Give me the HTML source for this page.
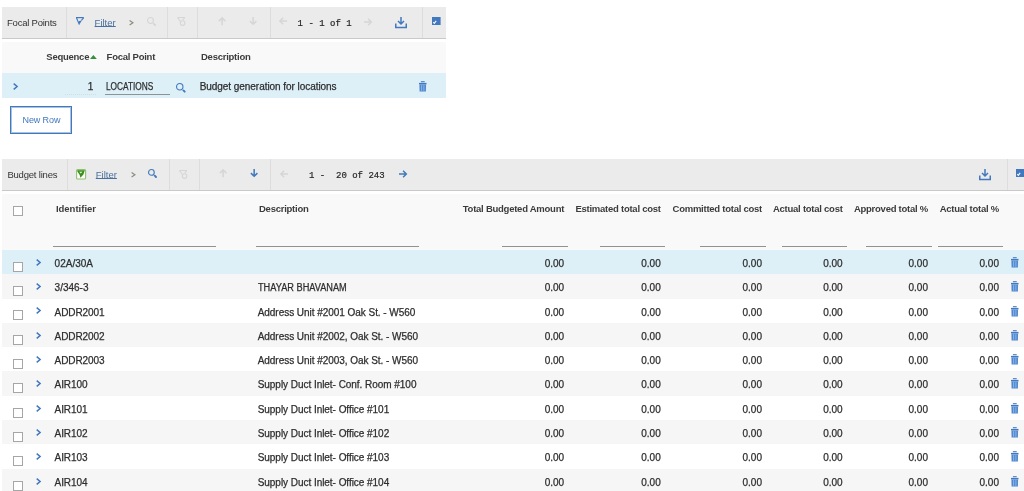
<!DOCTYPE html><html><head><meta charset="utf-8"><style>
*{margin:0;padding:0;box-sizing:border-box}
html,body{width:1024px;height:491px;overflow:hidden;background:#fff;font-family:"Liberation Sans",sans-serif;color:#2e2e2e}
#w{position:absolute;left:0;top:0;width:1024px;height:491px;will-change:transform}
.a{position:absolute;white-space:pre}
.tb{position:absolute;background:#ebebeb;border-bottom:1px solid #c9c9c9}
.sep{position:absolute;width:1px;background:#dddddd}
.t10{font-size:10px;line-height:12px;-webkit-text-stroke:0.25px currentColor}
.h{font-size:9.5px;line-height:12px;font-weight:bold;color:#3c3c3c;letter-spacing:-0.25px}
.t9{font-size:9px;line-height:12px}
.tt{font-size:10px;line-height:12px}
.mono{font-family:"Liberation Mono",monospace;font-size:9px;line-height:12px;font-weight:normal;color:#262626;-webkit-text-stroke:0.2px #262626}
.flt{color:#49709e;text-decoration:underline;text-underline-offset:0px}
.cb{position:absolute;width:10px;height:10px;border:1px solid #a6a6a6;background:#fff}
.ul{position:absolute;height:1px;background:#929292}
svg{position:absolute;overflow:visible}
</style></head><body><div id="w"><div class="tb" style="left:2px;top:7px;width:444px;height:32px"></div>
<div class="sep" style="left:66px;top:7px;height:31px"></div>
<div class="sep" style="left:167px;top:7px;height:31px"></div>
<div class="sep" style="left:197px;top:7px;height:31px"></div>
<div class="sep" style="left:270px;top:7px;height:31px"></div>
<div class="sep" style="left:422px;top:7px;height:31px"></div>
<div class="a tt" style="left:7px;top:17px;color:#333;font-size:9.5px;letter-spacing:-0.22px">Focal Points</div>
<svg style="left:76px;top:17.4px" width="9" height="8"><path d="M0 0.6 H7.8" stroke="#4178be" stroke-width="1.2"/><path d="M0.5 0.8 L3.3 7.6" stroke="#4178be" stroke-width="1.1"/><path d="M7.6 0.8 L5.4 3.4" stroke="#4178be" stroke-width="1.1"/><path d="M2.6 4.2 L6 3.2 L3.4 7.6 Z" fill="#4178be"/></svg>
<div class="a tt flt" style="left:94.6px;top:17px;font-size:9.5px;letter-spacing:0px">Filter</div>
<svg style="left:129.3px;top:19.9px" width="6" height="6"><path d="M0.6 0.5 L3.9 2.7 L0.6 4.9" fill="none" stroke="#8e8b7e" stroke-width="1.2"/></svg>
<svg style="left:146.8px;top:16.7px" width="10" height="10"><circle cx="3.5" cy="3.5" r="2.95" fill="none" stroke="#d6d6d6" stroke-width="1.1"/><path d="M6.9 6.9 L8.2 8.2" stroke="#d6d6d6" stroke-width="1.9" stroke-linecap="round"/></svg>
<svg style="left:177.3px;top:16.8px" width="10" height="10"><path d="M0.3 0.5 H8 M0.6 0.6 L3.2 4.2 M7.7 0.6 L5.8 3" fill="none" stroke="#d6d6d6" stroke-width="1.1"/><circle cx="5.6" cy="6.1" r="2.3" fill="none" stroke="#d6d6d6" stroke-width="1.1"/></svg>
<svg style="left:218px;top:17.2px" width="9" height="9"><path d="M4.15 8.2 V1 M0.9 4.1 L4.15 0.9 L7.4 4.1" fill="none" stroke="#d6d6d6" stroke-width="1.5"/></svg>
<svg style="left:248.5px;top:17px" width="9" height="9"><path d="M4.15 0 V7.2 M0.9 4.1 L4.15 7.3 L7.4 4.1" fill="none" stroke="#d6d6d6" stroke-width="1.5"/></svg>
<svg style="left:279px;top:17.4px" width="9" height="9"><path d="M8 4 H1 M4.1 0.8 L0.9 4 L4.1 7.2" fill="none" stroke="#d6d6d6" stroke-width="1.5"/></svg>
<div class="a mono" style="left:297.6px;top:17.8px;">1 - 1 of 1</div>
<svg style="left:364px;top:18px" width="9" height="9"><path d="M0 4 H7.2 M4.1 0.8 L7.3 4 L4.1 7.2" fill="none" stroke="#d6d6d6" stroke-width="1.5"/></svg>
<svg style="left:395px;top:17.1px" width="12" height="12"><path d="M6 0 V7 M3 4 L6 7 L9 4" fill="none" stroke="#4178be" stroke-width="1.5"/><path d="M0.75 6.4 V10.5 H11.25 V6.4" fill="none" stroke="#4178be" stroke-width="1.5"/></svg>
<svg style="left:432px;top:17.1px" width="9" height="8"><rect x="0" y="0" width="8.6" height="8" fill="#4178be"/><path d="M1.3 5.1 L2.3 6.3 L4.2 3.9" fill="none" stroke="#fff" stroke-width="1.1"/></svg>
<div class="a" style="left:2px;top:42px;width:444px;height:31.4px;background:#f9f9f9"></div>
<div class="a h" style="left:46.3px;top:51px;">Sequence</div>
<svg style="left:89.7px;top:54.6px" width="7" height="5"><path d="M0 4.1 L3.4 0 L6.8 4.1 Z" fill="#34913a"/></svg>
<div class="a h" style="left:106.6px;top:51px;">Focal Point</div>
<div class="a h" style="left:201px;top:51px;">Description</div>
<div class="a" style="left:2px;top:73.4px;width:444px;height:24.3px;background:#ddf0f8"></div>
<svg style="left:12.8px;top:82.6px" width="6" height="7"><path d="M0.7 0.6 L4.1 3.5 L0.7 6.4" fill="none" stroke="#4178be" stroke-width="1.5"/></svg>
<div class="a t10" style="right:930.7px;top:80.9px;text-align:right;">1</div>
<div class="a" style="left:64.6px;top:93.6px;width:31px;height:0;border-top:1px dotted #d2dde2"></div>
<div class="a t10" style="left:106px;top:80.9px;transform:scaleX(0.83);transform-origin:0 0">LOCATIONS</div>
<div class="ul" style="left:105px;top:93.8px;width:65px;background:#8c9396"></div>
<svg style="left:175.7px;top:82.9px" width="10" height="10"><circle cx="3.75" cy="3.75" r="3.2" fill="none" stroke="#4178be" stroke-width="1.1"/><path d="M7.4 7.4 L8.7 8.7" stroke="#4178be" stroke-width="1.9" stroke-linecap="round"/></svg>
<div class="a t10" style="left:199.7px;top:80.9px;letter-spacing:-0.05px">Budget generation for locations</div>
<svg style="left:418.8px;top:80.8px" width="8" height="11"><rect x="1.9" y="0" width="3.8" height="1.3" fill="#5b8fd3"/><rect x="0" y="1.9" width="7.5" height="1.5" fill="#4178be"/><path d="M0.4 3.4 H7.1 L6.9 10.6 H0.6 Z" fill="#4f88d0"/><rect x="2.3" y="4.2" width="0.8" height="5.6" fill="#9fc0ea"/><rect x="4.5" y="4.2" width="0.8" height="5.6" fill="#9fc0ea"/></svg>
<div class="a" style="left:10px;top:106px;width:62px;height:28px;border:1px solid #4178be;box-shadow:inset 0 0 0 1px rgba(65,120,190,0.45)"></div>
<div class="a t9" style="left:22.5px;top:114px;color:#4178be;letter-spacing:-0.1px">New Row</div>
<div class="tb" style="left:2px;top:159px;width:1022px;height:32px"></div>
<div class="sep" style="left:67px;top:159px;height:31px"></div>
<div class="sep" style="left:169px;top:159px;height:31px"></div>
<div class="sep" style="left:199px;top:159px;height:31px"></div>
<div class="sep" style="left:270px;top:159px;height:31px"></div>
<div class="sep" style="left:1007px;top:159px;height:31px"></div>
<div class="a tt" style="left:7.4px;top:169px;color:#333;font-size:9.5px;letter-spacing:-0.2px">Budget lines</div>
<svg style="left:75.6px;top:168.5px" width="11" height="11"><rect x="0.6" y="0.6" width="9" height="9.4" rx="1" fill="#fff" stroke="#8cc46a" stroke-width="1.1"/><path d="M1.2 1.3 H9 L8.4 2.6 L7.4 5.6 L4.4 8.8 L3.7 6 L1.4 2.4 Z" fill="#3b8d1e"/><path d="M3.2 2.7 H6.6 L4.7 4.5 Z" fill="#e9f5e0"/></svg>
<div class="a tt flt" style="left:95.8px;top:169px;font-size:9.5px;letter-spacing:0px">Filter</div>
<svg style="left:131px;top:171.8px" width="6" height="6"><path d="M0.6 0.5 L3.9 2.7 L0.6 4.9" fill="none" stroke="#8e8b7e" stroke-width="1.2"/></svg>
<svg style="left:148.2px;top:169px" width="10" height="10"><circle cx="3.4" cy="3.4" r="2.8499999999999996" fill="none" stroke="#4178be" stroke-width="1.1"/><path d="M6.7 6.7 L8.0 8.0" stroke="#4178be" stroke-width="1.9" stroke-linecap="round"/></svg>
<svg style="left:178.5px;top:169.5px" width="10" height="10"><path d="M0.3 0.5 H8 M0.6 0.6 L3.2 4.2 M7.7 0.6 L5.8 3" fill="none" stroke="#d6d6d6" stroke-width="1.1"/><circle cx="5.6" cy="6.1" r="2.3" fill="none" stroke="#d6d6d6" stroke-width="1.1"/></svg>
<svg style="left:218.8px;top:169.3px" width="9" height="9"><path d="M4.15 8.2 V1 M0.9 4.1 L4.15 0.9 L7.4 4.1" fill="none" stroke="#d6d6d6" stroke-width="1.5"/></svg>
<svg style="left:250.1px;top:169.3px" width="9" height="9"><path d="M4.15 0 V7.2 M0.9 4.1 L4.15 7.3 L7.4 4.1" fill="none" stroke="#4178be" stroke-width="1.5"/></svg>
<svg style="left:280.3px;top:169.6px" width="9" height="9"><path d="M8 4 H1 M4.1 0.8 L0.9 4 L4.1 7.2" fill="none" stroke="#d6d6d6" stroke-width="1.5"/></svg>
<div class="a mono" style="left:309px;top:169.8px;">1 -  20 of 243</div>
<svg style="left:398.8px;top:170.2px" width="9" height="9"><path d="M0 4 H7.2 M4.1 0.8 L7.3 4 L4.1 7.2" fill="none" stroke="#4178be" stroke-width="1.5"/></svg>
<svg style="left:979.2px;top:169.1px" width="12" height="12"><path d="M6 0 V7 M3 4 L6 7 L9 4" fill="none" stroke="#4178be" stroke-width="1.5"/><path d="M0.75 6.4 V10.5 H11.25 V6.4" fill="none" stroke="#4178be" stroke-width="1.5"/></svg>
<svg style="left:1016px;top:169.1px" width="9" height="8"><rect x="0" y="0" width="8.6" height="8" fill="#4178be"/><path d="M1.3 5.1 L2.3 6.3 L4.2 3.9" fill="none" stroke="#fff" stroke-width="1.1"/></svg>
<div class="a" style="left:2px;top:194px;width:1022px;height:56px;background:#f9f9f9"></div>
<div class="cb" style="left:13px;top:206px"></div>
<div class="a h" style="left:55.9px;top:203px;letter-spacing:0px">Identifier</div>
<div class="a h" style="left:259px;top:203px;">Description</div>
<div class="a h" style="right:459.9px;top:203px;text-align:right;">Total Budgeted Amount</div>
<div class="ul" style="left:502.3px;top:245.8px;width:66.09999999999997px"></div>
<div class="a h" style="right:363.29999999999995px;top:203px;text-align:right;">Estimated total cost</div>
<div class="ul" style="left:599.6px;top:245.8px;width:65.39999999999998px"></div>
<div class="a h" style="right:262px;top:203px;text-align:right;">Committed total cost</div>
<div class="ul" style="left:700px;top:245.8px;width:66px"></div>
<div class="a h" style="right:181.39999999999998px;top:203px;text-align:right;">Actual total cost</div>
<div class="ul" style="left:781.5px;top:245.8px;width:65.5px"></div>
<div class="a h" style="right:96px;top:203px;text-align:right;">Approved total %</div>
<div class="ul" style="left:866.4px;top:245.8px;width:65.60000000000002px"></div>
<div class="a h" style="right:25px;top:203px;text-align:right;">Actual total %</div>
<div class="ul" style="left:938.3px;top:245.8px;width:64.70000000000005px"></div>
<div class="ul" style="left:53.2px;top:245.8px;width:162.8px"></div>
<div class="ul" style="left:256.2px;top:245.8px;width:162.9px"></div>
<div class="a" style="left:2px;top:250.00px;width:1022px;height:24.29px;background:#ddf0f8"></div>
<div class="cb" style="left:13px;top:261.90px"></div>
<svg style="left:35.8px;top:258.9px" width="6" height="7"><path d="M0.7 0.6 L4.1 3.5 L0.7 6.4" fill="none" stroke="#4178be" stroke-width="1.5"/></svg>
<div class="a t10" style="left:54.6px;top:258.00px;">02A/30A</div>
<div class="a t10" style="right:459.9px;top:258.00px;text-align:right;">0.00</div>
<div class="a t10" style="right:363.29999999999995px;top:258.00px;text-align:right;">0.00</div>
<div class="a t10" style="right:262px;top:258.00px;text-align:right;">0.00</div>
<div class="a t10" style="right:181.39999999999998px;top:258.00px;text-align:right;">0.00</div>
<div class="a t10" style="right:96px;top:258.00px;text-align:right;">0.00</div>
<div class="a t10" style="right:25px;top:258.00px;text-align:right;">0.00</div>
<svg style="left:1011.4px;top:257.0px" width="8" height="11"><rect x="1.9" y="0" width="3.8" height="1.3" fill="#5b8fd3"/><rect x="0" y="1.9" width="7.5" height="1.5" fill="#4178be"/><path d="M0.4 3.4 H7.1 L6.9 10.6 H0.6 Z" fill="#4f88d0"/><rect x="2.3" y="4.2" width="0.8" height="5.6" fill="#9fc0ea"/><rect x="4.5" y="4.2" width="0.8" height="5.6" fill="#9fc0ea"/></svg>
<div class="a" style="left:2px;top:274.29px;width:1022px;height:24.29px;background:#f6f6f6"></div>
<div class="cb" style="left:13px;top:286.19px"></div>
<svg style="left:35.8px;top:283.19px" width="6" height="7"><path d="M0.7 0.6 L4.1 3.5 L0.7 6.4" fill="none" stroke="#4178be" stroke-width="1.5"/></svg>
<div class="a t10" style="left:54.6px;top:282.29px;">3/346-3</div>
<div class="a t10" style="left:257.7px;top:282.29px;transform:scaleX(0.92);transform-origin:0 0">THAYAR BHAVANAM</div>
<div class="a t10" style="right:459.9px;top:282.29px;text-align:right;">0.00</div>
<div class="a t10" style="right:363.29999999999995px;top:282.29px;text-align:right;">0.00</div>
<div class="a t10" style="right:262px;top:282.29px;text-align:right;">0.00</div>
<div class="a t10" style="right:181.39999999999998px;top:282.29px;text-align:right;">0.00</div>
<div class="a t10" style="right:96px;top:282.29px;text-align:right;">0.00</div>
<div class="a t10" style="right:25px;top:282.29px;text-align:right;">0.00</div>
<svg style="left:1011.4px;top:281.29px" width="8" height="11"><rect x="1.9" y="0" width="3.8" height="1.3" fill="#5b8fd3"/><rect x="0" y="1.9" width="7.5" height="1.5" fill="#4178be"/><path d="M0.4 3.4 H7.1 L6.9 10.6 H0.6 Z" fill="#4f88d0"/><rect x="2.3" y="4.2" width="0.8" height="5.6" fill="#9fc0ea"/><rect x="4.5" y="4.2" width="0.8" height="5.6" fill="#9fc0ea"/></svg>
<div class="a" style="left:2px;top:298.58px;width:1022px;height:24.29px;background:#ffffff"></div>
<div class="cb" style="left:13px;top:310.48px"></div>
<svg style="left:35.8px;top:307.47999999999996px" width="6" height="7"><path d="M0.7 0.6 L4.1 3.5 L0.7 6.4" fill="none" stroke="#4178be" stroke-width="1.5"/></svg>
<div class="a t10" style="left:54.6px;top:306.58px;letter-spacing:-0.1px">ADDR2001</div>
<div class="a t10" style="left:257.7px;top:306.58px;letter-spacing:-0.04px">Address Unit #2001 Oak St. - W560</div>
<div class="a t10" style="right:459.9px;top:306.58px;text-align:right;">0.00</div>
<div class="a t10" style="right:363.29999999999995px;top:306.58px;text-align:right;">0.00</div>
<div class="a t10" style="right:262px;top:306.58px;text-align:right;">0.00</div>
<div class="a t10" style="right:181.39999999999998px;top:306.58px;text-align:right;">0.00</div>
<div class="a t10" style="right:96px;top:306.58px;text-align:right;">0.00</div>
<div class="a t10" style="right:25px;top:306.58px;text-align:right;">0.00</div>
<svg style="left:1011.4px;top:305.58px" width="8" height="11"><rect x="1.9" y="0" width="3.8" height="1.3" fill="#5b8fd3"/><rect x="0" y="1.9" width="7.5" height="1.5" fill="#4178be"/><path d="M0.4 3.4 H7.1 L6.9 10.6 H0.6 Z" fill="#4f88d0"/><rect x="2.3" y="4.2" width="0.8" height="5.6" fill="#9fc0ea"/><rect x="4.5" y="4.2" width="0.8" height="5.6" fill="#9fc0ea"/></svg>
<div class="a" style="left:2px;top:322.87px;width:1022px;height:24.29px;background:#f6f6f6"></div>
<div class="cb" style="left:13px;top:334.77px"></div>
<svg style="left:35.8px;top:331.77px" width="6" height="7"><path d="M0.7 0.6 L4.1 3.5 L0.7 6.4" fill="none" stroke="#4178be" stroke-width="1.5"/></svg>
<div class="a t10" style="left:54.6px;top:330.87px;letter-spacing:-0.1px">ADDR2002</div>
<div class="a t10" style="left:257.7px;top:330.87px;letter-spacing:-0.04px">Address Unit #2002, Oak St. - W560</div>
<div class="a t10" style="right:459.9px;top:330.87px;text-align:right;">0.00</div>
<div class="a t10" style="right:363.29999999999995px;top:330.87px;text-align:right;">0.00</div>
<div class="a t10" style="right:262px;top:330.87px;text-align:right;">0.00</div>
<div class="a t10" style="right:181.39999999999998px;top:330.87px;text-align:right;">0.00</div>
<div class="a t10" style="right:96px;top:330.87px;text-align:right;">0.00</div>
<div class="a t10" style="right:25px;top:330.87px;text-align:right;">0.00</div>
<svg style="left:1011.4px;top:329.87px" width="8" height="11"><rect x="1.9" y="0" width="3.8" height="1.3" fill="#5b8fd3"/><rect x="0" y="1.9" width="7.5" height="1.5" fill="#4178be"/><path d="M0.4 3.4 H7.1 L6.9 10.6 H0.6 Z" fill="#4f88d0"/><rect x="2.3" y="4.2" width="0.8" height="5.6" fill="#9fc0ea"/><rect x="4.5" y="4.2" width="0.8" height="5.6" fill="#9fc0ea"/></svg>
<div class="a" style="left:2px;top:347.16px;width:1022px;height:24.29px;background:#ffffff"></div>
<div class="cb" style="left:13px;top:359.06px"></div>
<svg style="left:35.8px;top:356.05999999999995px" width="6" height="7"><path d="M0.7 0.6 L4.1 3.5 L0.7 6.4" fill="none" stroke="#4178be" stroke-width="1.5"/></svg>
<div class="a t10" style="left:54.6px;top:355.16px;letter-spacing:-0.1px">ADDR2003</div>
<div class="a t10" style="left:257.7px;top:355.16px;letter-spacing:-0.04px">Address Unit #2003, Oak St. - W560</div>
<div class="a t10" style="right:459.9px;top:355.16px;text-align:right;">0.00</div>
<div class="a t10" style="right:363.29999999999995px;top:355.16px;text-align:right;">0.00</div>
<div class="a t10" style="right:262px;top:355.16px;text-align:right;">0.00</div>
<div class="a t10" style="right:181.39999999999998px;top:355.16px;text-align:right;">0.00</div>
<div class="a t10" style="right:96px;top:355.16px;text-align:right;">0.00</div>
<div class="a t10" style="right:25px;top:355.16px;text-align:right;">0.00</div>
<svg style="left:1011.4px;top:354.15999999999997px" width="8" height="11"><rect x="1.9" y="0" width="3.8" height="1.3" fill="#5b8fd3"/><rect x="0" y="1.9" width="7.5" height="1.5" fill="#4178be"/><path d="M0.4 3.4 H7.1 L6.9 10.6 H0.6 Z" fill="#4f88d0"/><rect x="2.3" y="4.2" width="0.8" height="5.6" fill="#9fc0ea"/><rect x="4.5" y="4.2" width="0.8" height="5.6" fill="#9fc0ea"/></svg>
<div class="a" style="left:2px;top:371.45px;width:1022px;height:24.29px;background:#f6f6f6"></div>
<div class="cb" style="left:13px;top:383.35px"></div>
<svg style="left:35.8px;top:380.34999999999997px" width="6" height="7"><path d="M0.7 0.6 L4.1 3.5 L0.7 6.4" fill="none" stroke="#4178be" stroke-width="1.5"/></svg>
<div class="a t10" style="left:54.6px;top:379.45px;letter-spacing:-0.1px">AIR100</div>
<div class="a t10" style="left:257.7px;top:379.45px;letter-spacing:-0.04px">Supply Duct Inlet- Conf. Room #100</div>
<div class="a t10" style="right:459.9px;top:379.45px;text-align:right;">0.00</div>
<div class="a t10" style="right:363.29999999999995px;top:379.45px;text-align:right;">0.00</div>
<div class="a t10" style="right:262px;top:379.45px;text-align:right;">0.00</div>
<div class="a t10" style="right:181.39999999999998px;top:379.45px;text-align:right;">0.00</div>
<div class="a t10" style="right:96px;top:379.45px;text-align:right;">0.00</div>
<div class="a t10" style="right:25px;top:379.45px;text-align:right;">0.00</div>
<svg style="left:1011.4px;top:378.45px" width="8" height="11"><rect x="1.9" y="0" width="3.8" height="1.3" fill="#5b8fd3"/><rect x="0" y="1.9" width="7.5" height="1.5" fill="#4178be"/><path d="M0.4 3.4 H7.1 L6.9 10.6 H0.6 Z" fill="#4f88d0"/><rect x="2.3" y="4.2" width="0.8" height="5.6" fill="#9fc0ea"/><rect x="4.5" y="4.2" width="0.8" height="5.6" fill="#9fc0ea"/></svg>
<div class="a" style="left:2px;top:395.74px;width:1022px;height:24.29px;background:#ffffff"></div>
<div class="cb" style="left:13px;top:407.64px"></div>
<svg style="left:35.8px;top:404.64px" width="6" height="7"><path d="M0.7 0.6 L4.1 3.5 L0.7 6.4" fill="none" stroke="#4178be" stroke-width="1.5"/></svg>
<div class="a t10" style="left:54.6px;top:403.74px;letter-spacing:-0.1px">AIR101</div>
<div class="a t10" style="left:257.7px;top:403.74px;letter-spacing:-0.04px">Supply Duct Inlet- Office #101</div>
<div class="a t10" style="right:459.9px;top:403.74px;text-align:right;">0.00</div>
<div class="a t10" style="right:363.29999999999995px;top:403.74px;text-align:right;">0.00</div>
<div class="a t10" style="right:262px;top:403.74px;text-align:right;">0.00</div>
<div class="a t10" style="right:181.39999999999998px;top:403.74px;text-align:right;">0.00</div>
<div class="a t10" style="right:96px;top:403.74px;text-align:right;">0.00</div>
<div class="a t10" style="right:25px;top:403.74px;text-align:right;">0.00</div>
<svg style="left:1011.4px;top:402.74px" width="8" height="11"><rect x="1.9" y="0" width="3.8" height="1.3" fill="#5b8fd3"/><rect x="0" y="1.9" width="7.5" height="1.5" fill="#4178be"/><path d="M0.4 3.4 H7.1 L6.9 10.6 H0.6 Z" fill="#4f88d0"/><rect x="2.3" y="4.2" width="0.8" height="5.6" fill="#9fc0ea"/><rect x="4.5" y="4.2" width="0.8" height="5.6" fill="#9fc0ea"/></svg>
<div class="a" style="left:2px;top:420.03px;width:1022px;height:24.29px;background:#f6f6f6"></div>
<div class="cb" style="left:13px;top:431.93px"></div>
<svg style="left:35.8px;top:428.92999999999995px" width="6" height="7"><path d="M0.7 0.6 L4.1 3.5 L0.7 6.4" fill="none" stroke="#4178be" stroke-width="1.5"/></svg>
<div class="a t10" style="left:54.6px;top:428.03px;letter-spacing:-0.1px">AIR102</div>
<div class="a t10" style="left:257.7px;top:428.03px;letter-spacing:-0.04px">Supply Duct Inlet- Office #102</div>
<div class="a t10" style="right:459.9px;top:428.03px;text-align:right;">0.00</div>
<div class="a t10" style="right:363.29999999999995px;top:428.03px;text-align:right;">0.00</div>
<div class="a t10" style="right:262px;top:428.03px;text-align:right;">0.00</div>
<div class="a t10" style="right:181.39999999999998px;top:428.03px;text-align:right;">0.00</div>
<div class="a t10" style="right:96px;top:428.03px;text-align:right;">0.00</div>
<div class="a t10" style="right:25px;top:428.03px;text-align:right;">0.00</div>
<svg style="left:1011.4px;top:427.03px" width="8" height="11"><rect x="1.9" y="0" width="3.8" height="1.3" fill="#5b8fd3"/><rect x="0" y="1.9" width="7.5" height="1.5" fill="#4178be"/><path d="M0.4 3.4 H7.1 L6.9 10.6 H0.6 Z" fill="#4f88d0"/><rect x="2.3" y="4.2" width="0.8" height="5.6" fill="#9fc0ea"/><rect x="4.5" y="4.2" width="0.8" height="5.6" fill="#9fc0ea"/></svg>
<div class="a" style="left:2px;top:444.32px;width:1022px;height:24.29px;background:#ffffff"></div>
<div class="cb" style="left:13px;top:456.22px"></div>
<svg style="left:35.8px;top:453.21999999999997px" width="6" height="7"><path d="M0.7 0.6 L4.1 3.5 L0.7 6.4" fill="none" stroke="#4178be" stroke-width="1.5"/></svg>
<div class="a t10" style="left:54.6px;top:452.32px;letter-spacing:-0.1px">AIR103</div>
<div class="a t10" style="left:257.7px;top:452.32px;letter-spacing:-0.04px">Supply Duct Inlet- Office #103</div>
<div class="a t10" style="right:459.9px;top:452.32px;text-align:right;">0.00</div>
<div class="a t10" style="right:363.29999999999995px;top:452.32px;text-align:right;">0.00</div>
<div class="a t10" style="right:262px;top:452.32px;text-align:right;">0.00</div>
<div class="a t10" style="right:181.39999999999998px;top:452.32px;text-align:right;">0.00</div>
<div class="a t10" style="right:96px;top:452.32px;text-align:right;">0.00</div>
<div class="a t10" style="right:25px;top:452.32px;text-align:right;">0.00</div>
<svg style="left:1011.4px;top:451.32px" width="8" height="11"><rect x="1.9" y="0" width="3.8" height="1.3" fill="#5b8fd3"/><rect x="0" y="1.9" width="7.5" height="1.5" fill="#4178be"/><path d="M0.4 3.4 H7.1 L6.9 10.6 H0.6 Z" fill="#4f88d0"/><rect x="2.3" y="4.2" width="0.8" height="5.6" fill="#9fc0ea"/><rect x="4.5" y="4.2" width="0.8" height="5.6" fill="#9fc0ea"/></svg>
<div class="a" style="left:2px;top:468.61px;width:1022px;height:24.29px;background:#f6f6f6"></div>
<div class="cb" style="left:13px;top:480.51px"></div>
<svg style="left:35.8px;top:477.51px" width="6" height="7"><path d="M0.7 0.6 L4.1 3.5 L0.7 6.4" fill="none" stroke="#4178be" stroke-width="1.5"/></svg>
<div class="a t10" style="left:54.6px;top:476.61px;letter-spacing:-0.1px">AIR104</div>
<div class="a t10" style="left:257.7px;top:476.61px;letter-spacing:-0.04px">Supply Duct Inlet- Office #104</div>
<div class="a t10" style="right:459.9px;top:476.61px;text-align:right;">0.00</div>
<div class="a t10" style="right:363.29999999999995px;top:476.61px;text-align:right;">0.00</div>
<div class="a t10" style="right:262px;top:476.61px;text-align:right;">0.00</div>
<div class="a t10" style="right:181.39999999999998px;top:476.61px;text-align:right;">0.00</div>
<div class="a t10" style="right:96px;top:476.61px;text-align:right;">0.00</div>
<div class="a t10" style="right:25px;top:476.61px;text-align:right;">0.00</div>
<svg style="left:1011.4px;top:475.61px" width="8" height="11"><rect x="1.9" y="0" width="3.8" height="1.3" fill="#5b8fd3"/><rect x="0" y="1.9" width="7.5" height="1.5" fill="#4178be"/><path d="M0.4 3.4 H7.1 L6.9 10.6 H0.6 Z" fill="#4f88d0"/><rect x="2.3" y="4.2" width="0.8" height="5.6" fill="#9fc0ea"/><rect x="4.5" y="4.2" width="0.8" height="5.6" fill="#9fc0ea"/></svg></div></body></html>
